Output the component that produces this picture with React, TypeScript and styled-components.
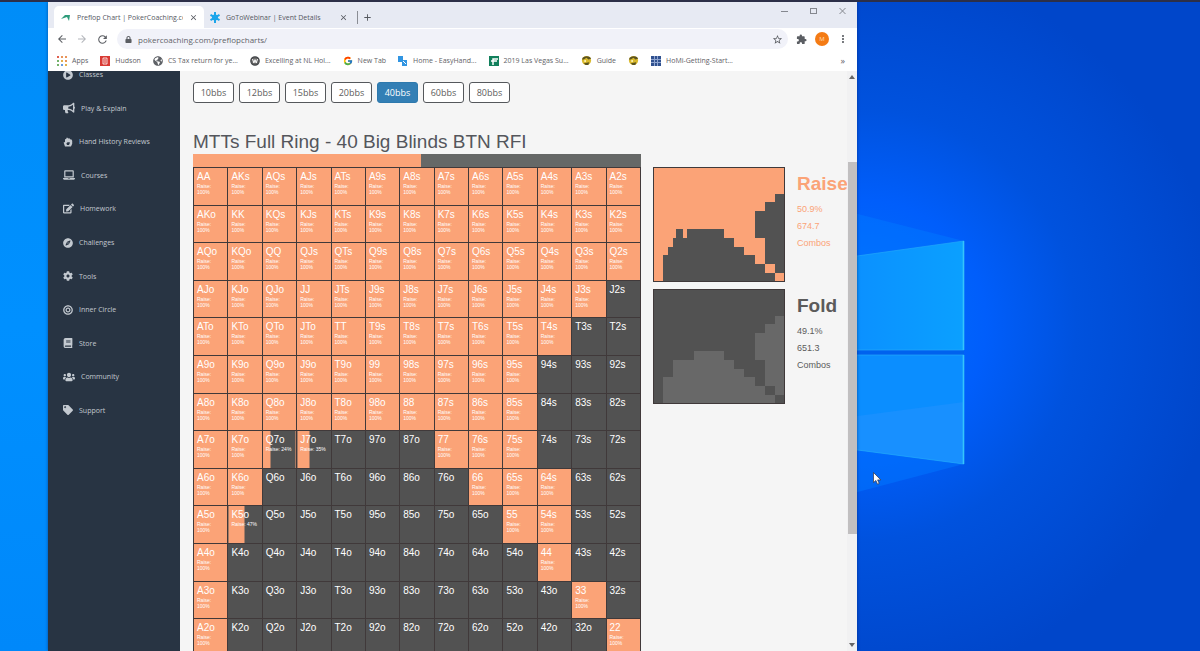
import React from 'react';
import styled, { createGlobalStyle } from 'styled-components';
import { FaCog, FaBullhorn, FaLaptop, FaEdit, FaCompass, FaBullseye, FaBook, FaUsers, FaTag, FaPlayCircle, FaLock, FaGlobeAmericas } from 'react-icons/fa';
import { FcGoogle } from 'react-icons/fc';
import { MdExtension, MdOutlineStarBorder, MdMoreVert, MdClose, MdAdd, MdArrowBack, MdArrowForward, MdRefresh } from 'react-icons/md';

const ORANGE = '#fba377';
const DARK = '#525252';
const LINE = '#40393a';

const Global = createGlobalStyle`
  *, *::before, *::after { box-sizing: border-box; }
  body { margin: 0; font-family: "Open Sans", sans-serif; }
  button { font: inherit; color: inherit; background: none; border: 0; padding: 0; display: flex; align-items: center; justify-content: center; }
  a { color: inherit; text-decoration: none; }
  svg { display: block; flex: none; }
`;

const Desktop = styled.div`
  position: relative;
  height: 100vh;
  min-height: 480px;
  overflow: hidden;
  padding: 0 343px 0 48px;
  border-top: 2px solid #2c2f48;
  background: #0047c8;
`;
const Wallpaper = styled.svg`
  position: absolute;
  inset: 0;
  width: 100%;
  height: 100%;
`;
const Pointer = styled.svg`
  position: absolute;
  left: 873px;
  top: 470px;
`;
const Browser = styled.div`
  position: relative;
  height: 100%;
  display: flex;
  flex-direction: column;
  background: #fff;
  box-shadow: 0 0 3px rgba(0, 20, 80, .5);
`;
const TabStrip = styled.div`
  display: flex;
  height: 26px;
  flex: none;
  padding: 4px 10px 0 6px;
  background: #e7eaf3;
  color: #55585f;
  font-size: 7px;
`;
const Tab = styled.div<{ $active?: boolean }>`
  display: flex;
  align-items: center;
  gap: 6px;
  width: 150px;
  padding: 0 6px;
  border-radius: 5px 5px 0 0;
  background: ${p => (p.$active ? '#fff' : 'transparent')};
  span { flex: 1; overflow: hidden; white-space: nowrap; }
`;
const NewTab = styled.button`
  height: 13px;
  margin: 5px 0 0 3px;
  padding-left: 4px;
  border-left: 1px solid #8a8d94;
`;
const WindowButtons = styled.div`
  display: flex;
  align-items: center;
  gap: 20px;
  height: 8px;
  margin-left: auto;
  color: #85888f;
`;
const Toolbar = styled.div`
  display: flex;
  align-items: center;
  gap: 8px;
  height: 22px;
  flex: none;
  padding: 0 8px;
  color: #5b5e63;
`;
const Address = styled.label`
  flex: 1;
  display: flex;
  align-items: center;
  gap: 6px;
  height: 20px;
  padding: 0 5px 0 8px;
  border-radius: 10px;
  background: #f1f2f9;
  input { flex: 1; min-width: 0; padding: 0; border: 0; outline: 0; background: none; color: #5f6268; font: 8px "Open Sans", sans-serif; }
`;
const Avatar = styled.button`
  && {
    width: 14px;
    height: 14px;
    border-radius: 7px;
    background: #f47b14;
    color: #ffd9b0;
    font-size: 6px;
  }
`;
const Bookmarks = styled.nav`
  display: flex;
  align-items: center;
  gap: 12px;
  height: 21px;
  flex: none;
  padding: 0 12px 0 9px;
  font-size: 7px;
  color: #5f6267;
  white-space: nowrap;
`;
const Bookmark = styled.a`
  display: flex;
  align-items: center;
  gap: 5px;
`;
const More = styled.button`
  && { margin-left: auto; font-size: 9px; }
`;
const Page = styled.div`
  flex: 1;
  min-height: 0;
  display: flex;
  overflow: hidden;
  background: #f5f5f5;
`;
const Sidebar = styled.nav`
  width: 132px;
  flex: none;
  background: #283443;
  overflow: hidden;
`;
const MenuList = styled.ul`
  display: flex;
  flex-direction: column;
  height: 369px;
  margin: -13px 0 0;
  padding: 0 0 0 15px;
  list-style: none;
  font-size: 7px;
  color: #c3c9d0;
`;
const MenuItem = styled.li`
  flex: 1;
  display: flex;
  align-items: center;
  a { display: flex; align-items: center; gap: 6px; }
`;
const Main = styled.main`
  flex: 1;
  min-width: 0;
  padding: 11px 0 0 13px;
  overflow: hidden;
`;
const Stacks = styled.div`
  display: flex;
  gap: 5px;
`;
const StackButton = styled.button<{ $active?: boolean }>`
  && {
    width: 41px;
    height: 21px;
    border: 1px solid ${p => (p.$active ? '#2e79ad' : '#55585c')};
    border-radius: 3px;
    background: ${p => (p.$active ? '#337fb5' : '#fff')};
    color: ${p => (p.$active ? '#fff' : '#5c5c5c')};
    font-size: 9px;
  }
`;
const Title = styled.h1`
  margin: 27px 0 0;
  font: 19px/24px "Liberation Sans", Arial, sans-serif;
  color: #54565c;
`;
const Columns = styled.div`
  display: flex;
  align-items: flex-start;
  gap: 12px;
`;
const Chart = styled.section`
  flex: 0 0 448px;
`;
const Ratio = styled.div`
  height: 13px;
  background: linear-gradient(to right, ${ORANGE} 51%, #666867 51%);
`;
const Grid = styled.table`
  width: 100%;
  height: 490px;
  table-layout: fixed;
  border-collapse: collapse;
  font-family: "Liberation Sans", Arial, sans-serif;
  color: #fff;
`;
const Cell = styled.td<{ $raise: number }>`
  padding: 3px 0 0 3px;
  vertical-align: top;
  border: 1px solid ${LINE};
  background: linear-gradient(to right, ${ORANGE} ${p => p.$raise}%, ${DARK} ${p => p.$raise}%);
  white-space: nowrap;
  overflow: hidden;
`;
const Hand = styled.div`
  font-size: 10px;
  line-height: 12px;
`;
const Freq = styled.div`
  font-size: 5px;
  line-height: 6px;
`;
const Summary = styled.aside`
  flex: 1;
  min-width: 0;
  display: flex;
  flex-direction: column;
  gap: 7px;
  padding-top: 13px;
  overflow: hidden;
  font-family: "Liberation Sans", Arial, sans-serif;
`;
const Action = styled.div<{ $color: string }>`
  display: flex;
  gap: 12px;
  height: 115px;
  color: ${p => p.$color};
`;
const ActionText = styled.div`
  padding-top: 5px;
  h2 { margin: 0 0 5px; font-size: 19px; line-height: 24px; }
  p { margin: 0; font-size: 9px; line-height: 17px; }
`;
const Scrollbar = styled.div`
  display: flex;
  flex-direction: column;
  align-items: center;
  width: 10px;
  flex: none;
  padding: 4px 0;
  background: #f1f1f2;
`;
const Thumb = styled.div`
  width: 9px;
  flex: 0 0 65%;
  margin: 83px 0 auto;
  background: #c1bfc0;
`;

const RANKS = 'AKQJT98765432';
// Raise frequency for every hand, one row of the matrix per line; dots are folds.
const RAISES = [
  'xxxxxxxxxxxxx',
  'xxxxxxxxxxxxx',
  'xxxxxxxxxxxxx',
  'xxxxxxxxxxxx.',
  'xxxxxxxxxxx..',
  'xxxxxxxxxx...',
  'xxxxxxxxxx...',
  'xxab...xxx...',
  'xx......xxx..',
  'xc.......xx..',
  'x.........x..',
  'x..........x.',
  'x...........x',
];
const FREQ: Record<string, number> = { x: 100, a: 24, b: 35, c: 47, '.': 0 };

function handName(r: number, c: number) {
  if (r === c) return RANKS[r] + RANKS[c];
  return c > r ? RANKS[r] + RANKS[c] + 's' : RANKS[c] + RANKS[r] + 'o';
}

function MiniChart({ fold }: { fold?: boolean }) {
  return (
    <svg width="132" height="115" viewBox="0 0 132 115" shapeRendering="crispEdges">
      <rect width="132" height="115" fill={fold ? '#686868' : DARK} />
      <g transform="scale(10.1538 8.8462)">
        {RAISES.map((row, r) =>
          [...row].map((k, c) => {
            const share = FREQ[k] / 100;
            return share > 0 ? <rect key={`${r}-${c}`} x={c} y={r} width={fold ? 1 : share} height={1} fill={fold ? DARK : ORANGE} /> : null;
          })
        )}
      </g>
      <rect x=".5" y=".5" width="131" height="114" fill="none" stroke={LINE} />
    </svg>
  );
}

const HandIcon = ({ size }: { size: number }) => (
  <svg width={size} height={size} viewBox="0 0 10 10">
    <path d="M2 9.500L.6 5.600 2 5V2.300L3.200 2l.3-1.300h1.200L5 1.500l1.500-.3.500 1 1.500.3.700 1.200v3L8 9.500z" fill="currentColor" />
    <path d="M3.400 6.600C4 5 5.500 5 7 5.600L6 8H4z" fill="#283443" />
  </svg>
);

const MENU = [
  ['Classes', FaPlayCircle, 10], ['Play & Explain', FaBullhorn, 12], ['Hand History Reviews', HandIcon, 10], ['Courses', FaLaptop, 12],
  ['Homework', FaEdit, 11], ['Challenges', FaCompass, 10], ['Tools', FaCog, 10], ['Inner Circle', FaBullseye, 10],
  ['Store', FaBook, 10], ['Community', FaUsers, 12], ['Support', FaTag, 10],
] as const;

const Bee = () => (
  <svg width="11" height="11" viewBox="0 0 12 12">
    <circle cx="6" cy="6" r="5" fill="#d9b92c" />
    <path d="M1 5C2 1 9 0 11 4L8 5 6 3 3 5zM3 9l6-1-1 3H5z" fill="#5b5320" />
    <circle cx="4.500" cy="6.500" r="1.100" fill="#fff6c0" />
  </svg>
);
const APP_COLORS = ['#e0604f', '#e8955a', '#e8955a', '#74b26a', '#e2b04c', '#e8955a', '#74b26a', '#6a9be0', '#e2b04c'];
const AppsIcon = () => (
  <svg width="10" height="10">
    {APP_COLORS.map((c, i) => <rect key={i} x={(i % 3) * 4} y={Math.floor(i / 3) * 4} width="2" height="2" fill={c} />)}
  </svg>
);
const Asterisk = () => (
  <svg width="10" height="11" viewBox="0 0 10 11">
    <path d="M5 0v11M.5 2.800l9 5.400M.5 8.200l9-5.400" stroke="#1ba5ea" strokeWidth="2" />
    <circle cx="5" cy="5.500" r="3" fill="#1ba5ea" />
  </svg>
);
const PressIcon = () => (
  <svg width="10" height="10" viewBox="0 0 10 10">
    <circle cx="5" cy="5" r="4.200" fill="#6a6a6a" stroke="#44474a" strokeWidth="1.200" />
    <path d="M2.500 3l1.400 4L5 3.600 6.200 7l1.300-4" fill="none" stroke="#fff" />
  </svg>
);

export default function App() {
  return (
    <Desktop>
      <Global />
      <Wallpaper viewBox="0 2 1200 649" preserveAspectRatio="none">
        <defs>
          <radialGradient id="glow" gradientUnits="userSpaceOnUse" cx="860" cy="325" r="360">
            <stop offset="0" stopColor="#0072ff" />
            <stop offset=".35" stopColor="#005efb" />
            <stop offset=".6" stopColor="#0052de" />
            <stop offset="1" stopColor="#0046ca" />
          </radialGradient>
          <linearGradient id="left" x1="0" y1="0" x2="0" y2="1">
            <stop offset="0" stopColor="#008df8" />
            <stop offset=".5" stopColor="#0090ff" />
            <stop offset="1" stopColor="#0088fa" />
          </linearGradient>
          <linearGradient id="pane" x1="0" y1="0" x2="1" y2="0">
            <stop offset="0" stopColor="#0b90ff" />
            <stop offset="1" stopColor="#0ba0ff" />
          </linearGradient>
        </defs>
        <rect width="1200" height="651" fill="url(#glow)" />
        <rect width="120" height="651" fill="url(#left)" />
        <path d="M850 212L964 241V464L850 494Z" fill="#0078ff" opacity=".5" />
        <path d="M850 257L964 241V350H850Z" fill="url(#pane)" />
        <path d="M850 350H964V355H850Z" fill="#0062ee" />
        <path d="M850 355H964V464L850 449Z" fill="#0b8eff" />
        <path d="M850 417L964 402V464L850 449Z" fill="#1890ff" />
        <path d="M850 257L964 241M850 350H964M850 355H964M850 449L964 464" fill="none" stroke="#22a8fa" opacity=".7" />
        <path d="M963.500 241V350M963.500 355V464" fill="none" stroke="#35c4fa" strokeWidth="1.600" />
      </Wallpaper>
      <Browser>
        <TabStrip>
          <Tab $active>
            <svg width="11" height="10" viewBox="0 0 11 10"><path d="M1 7l4-4h5L9 9 7 5z" fill="#2f9c7b" /></svg>
            <span>Preflop Chart | PokerCoaching.co</span><button aria-label="Close tab"><MdClose size={9} /></button>
          </Tab>
          <Tab>
            <Asterisk />
            <span>GoToWebinar | Event Details</span><button aria-label="Close tab"><MdClose size={9} /></button>
          </Tab>
          <NewTab aria-label="New tab"><MdAdd size={11} /></NewTab>
          <WindowButtons>
            <button aria-label="Minimize"><svg width="9" height="9"><path d="M1 5.500h7" stroke="currentColor" /></svg></button>
            <button aria-label="Maximize"><svg width="9" height="9"><rect x="1.500" y="2.500" width="6" height="5" fill="none" stroke="currentColor" /></svg></button>
            <button aria-label="Close"><svg width="9" height="9"><path d="M1.500 2l6 6M7.500 2l-6 6" stroke="currentColor" /></svg></button>
          </WindowButtons>
        </TabStrip>
        <Toolbar>
          <button aria-label="Back"><MdArrowBack size={12} /></button>
          <button aria-label="Forward"><MdArrowForward size={12} color="#b3b6bb" /></button>
          <button aria-label="Reload"><MdRefresh size={13} /></button>
          <Address>
            <FaLock size={7} />
            <input aria-label="Address" defaultValue="pokercoaching.com/preflopcharts/" />
            <MdOutlineStarBorder size={11} />
          </Address>
          <button aria-label="Extensions"><MdExtension size={11} /></button>
          <Avatar aria-label="Profile">M</Avatar>
          <button aria-label="Menu"><MdMoreVert size={12} /></button>
        </Toolbar>
        <Bookmarks>
          <Bookmark href="#"><AppsIcon />Apps</Bookmark>
          <Bookmark href="#"><svg width="10" height="10"><rect width="10" height="10" fill="#d93a34" /><path d="M3 2h4v6H3zM4 4h2M4 6h2" stroke="#fff" fill="none" strokeWidth=".8" /></svg>Hudson</Bookmark>
          <Bookmark href="#"><FaGlobeAmericas size={10} />CS Tax return for ye...</Bookmark>
          <Bookmark href="#"><PressIcon />Excelling at NL Hol...</Bookmark>
          <Bookmark href="#"><FcGoogle size={10} />New Tab</Bookmark>
          <Bookmark href="#"><svg width="10" height="10"><path d="M0 0h5v4h4v6H4V6H0z" fill="#3195e2" /><path d="M5 5l3 3" stroke="#fff" /></svg>Home - EasyHand...</Bookmark>
          <Bookmark href="#"><svg width="10" height="10"><rect width="10" height="10" fill="#12805c" /><path d="M4 9V3h5M2 5h6" stroke="#fff" fill="none" strokeWidth="1.500" /></svg>2019 Las Vegas Su...</Bookmark>
          <Bookmark href="#"><Bee />Guide</Bookmark>
          <Bookmark href="#" aria-label="Bee"><Bee /></Bookmark>
          <Bookmark href="#"><svg width="10" height="10"><rect width="10" height="10" fill="#30518f" /><path d="M3.500 0v10M6.500 0v10M0 3.500h10M0 6.500h10" stroke="#8ea4cf" /></svg>HoMi-Getting-Start...</Bookmark>
          <More aria-label="More bookmarks">»</More>
        </Bookmarks>
        <Page>
          <Sidebar>
            <MenuList>
              {MENU.map(([label, Icon, size]) => (
                <MenuItem key={label}><a href="#"><Icon size={size} />{label}</a></MenuItem>
              ))}
            </MenuList>
          </Sidebar>
          <Main>
            <Stacks>
              {[10, 12, 15, 20, 40, 60, 80].map(n => <StackButton key={n} $active={n === 40}>{n}bbs</StackButton>)}
            </Stacks>
            <Title>MTTs Full Ring - 40 Big Blinds BTN RFI</Title>
            <Columns>
              <Chart>
                <Ratio />
                <Grid>
                  <tbody>
                    {RAISES.map((row, r) => (
                      <tr key={r}>
                        {[...row].map((k, c) => (
                          <Cell key={c} $raise={FREQ[k]}>
                            <Hand>{handName(r, c)}</Hand>
                            {k === 'x' && <Freq>Raise:<br />100%</Freq>}
                            {k !== 'x' && k !== '.' && <Freq>Raise: {FREQ[k]}%</Freq>}
                          </Cell>
                        ))}
                      </tr>
                    ))}
                  </tbody>
                </Grid>
              </Chart>
              <Summary>
                <Action $color={ORANGE}>
                  <MiniChart />
                  <ActionText><h2>Raise</h2><p>50.9%</p><p>674.7</p><p>Combos</p></ActionText>
                </Action>
                <Action $color="#5b5b5b">
                  <MiniChart fold />
                  <ActionText><h2>Fold</h2><p>49.1%</p><p>651.3</p><p>Combos</p></ActionText>
                </Action>
              </Summary>
            </Columns>
          </Main>
          <Scrollbar>
            <svg width="6" height="4"><path d="M0 4L3 0l3 4z" fill="#666" /></svg>
            <Thumb />
            <svg width="6" height="4"><path d="M0 0l3 4 3-4z" fill="#666" /></svg>
          </Scrollbar>
        </Page>
      </Browser>
      <Pointer width="9" height="13" viewBox="0 0 9 13"><path d="M.5.5v10l2.400-2 1.600 3.700 1.700-.8-1.600-3.500h3.200z" fill="#fff" stroke="#334" strokeWidth=".7" /></Pointer>
    </Desktop>
  );
}
